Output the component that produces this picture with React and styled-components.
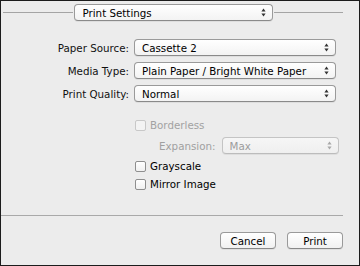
import React from "react";
import styled, { createGlobalStyle } from "styled-components";

const Global = createGlobalStyle`
  * { box-sizing: border-box; }
  html, body { margin: 0; padding: 0; background: #ececec; }
  body { font-family: "DejaVu Sans", "Liberation Sans", sans-serif; }
`;

const Window = styled.div`
  width: 360px;
  height: 266px;
  border: 1px solid #1c1c1c;
  background: #ececec;
  display: flex;
  flex-direction: column;
  font-size: 10.3px;
  color: #000;
`;

const Header = styled.div`
  display: flex;
  align-items: center;
  margin-top: 3px;
  padding: 0 16px 0 2px;
  gap: 1px;
`;

const HeaderLine = styled.div`
  flex: 1;
  height: 1px;
  background: #a4a4a4;
`;

const PopupBox = styled.div`
  width: ${(p) => p.$width}px;
  height: ${(p) => p.$height || 17}px;
  flex: none;
  display: flex;
  align-items: center;
  padding: 0 4px 0 ${(p) => p.$pad || 7}px;
  border: 1px solid ${(p) => (p.$disabled ? "#c4c4c4" : "#9a9a9a")};
  border-bottom-color: ${(p) => (p.$disabled ? "#bcbcbc" : "#8a8a8a")};
  border-radius: 4px;
  background: ${(p) =>
    p.$disabled
      ? "linear-gradient(#f6f6f6, #efefef)"
      : "linear-gradient(#ffffff, #f3f3f3)"};
  box-shadow: 0 1px 0 rgba(0, 0, 0, 0.06);
  color: ${(p) => (p.$disabled ? "#9c9c9c" : "#000")};
  font-size: 10.3px;
  white-space: nowrap;
`;

const PopupText = styled.span`
  flex: 1;
  overflow: hidden;
`;

const ArrowSvg = styled.svg`
  flex: none;
  margin-right: 2px;
`;

function Arrows({ disabled }) {
  const c = disabled ? "#a8a8a8" : "#333";
  return (
    <ArrowSvg width="5" height="9" viewBox="0 0 5 9">
      <path d="M2.5 0.5 L4.6 3.5 L0.4 3.5 Z" fill={c} />
      <path d="M2.5 8.5 L4.6 5.5 L0.4 5.5 Z" fill={c} />
    </ArrowSvg>
  );
}

function Popup({ children, width, disabled, height, pad }) {
  return (
    <PopupBox $width={width} $disabled={disabled} $height={height} $pad={pad}>
      <PopupText>{children}</PopupText>
      <Arrows disabled={disabled} />
    </PopupBox>
  );
}

const Form = styled.div`
  display: flex;
  flex-direction: column;
  gap: 6px;
  margin-top: 18px;
`;

const Row = styled.div`
  display: flex;
  align-items: center;
  gap: 5px;
`;

const Label = styled.div`
  width: ${(p) => p.$width}px;
  text-align: right;
  color: ${(p) => (p.$disabled ? "#a0a0a0" : "#111")};
  white-space: nowrap;
  flex: none;
`;

const Options = styled.div`
  display: flex;
  flex-direction: column;
  gap: 6px;
  margin-top: 17px;
  padding-left: 134px;
`;

const CheckRow = styled.label`
  display: flex;
  align-items: center;
  gap: 4px;
  height: 12px;
  color: ${(p) => (p.$disabled ? "#a2a2a2" : "#000")};
`;

const Box = styled.span`
  width: 11px;
  height: 11px;
  flex: none;
  border: 1px solid ${(p) => (p.$disabled ? "#c8c8c8" : "#8e8e8e")};
  border-radius: 2px;
  background: ${(p) =>
    p.$disabled ? "#f3f3f3" : "linear-gradient(#ffffff, #f0f0f0)"};
`;

const SubRow = styled.div`
  display: flex;
  align-items: center;
  gap: 6px;
  padding-left: 24px;
`;

const Separator = styled.div`
  height: 1px;
  background: #a9a9a9;
  margin: 25px 16px 0 0;
`;

const Footer = styled.div`
  display: flex;
  justify-content: flex-end;
  gap: 11px;
  padding: 16px 16px 0 0;
`;

const Button = styled.button`
  width: 56px;
  height: 17px;
  padding: 0;
  border: 1px solid #9a9a9a;
  border-bottom-color: #888;
  border-radius: 4px;
  background: linear-gradient(#ffffff, #f1f1f1);
  box-shadow: 0 1px 0 rgba(0, 0, 0, 0.06);
  font-family: inherit;
  font-size: 10.3px;
  color: #000;
`;

export default function App() {
  return (
    <>
      <Global />
      <Window>
        <Header>
          <HeaderLine />
          <Popup width={199} pad={8}>
            Print Settings
          </Popup>
          <HeaderLine />
        </Header>
        <Form>
          <Row>
            <Label $width={128}>Paper Source:</Label>
            <Popup width={202}>Cassette 2</Popup>
          </Row>
          <Row>
            <Label $width={128}>Media Type:</Label>
            <Popup width={202}>Plain Paper / Bright White Paper</Popup>
          </Row>
          <Row>
            <Label $width={128}>Print Quality:</Label>
            <Popup width={202}>Normal</Popup>
          </Row>
        </Form>
        <Options>
          <CheckRow $disabled>
            <Box $disabled />
            Borderless
          </CheckRow>
          <SubRow>
            <Label $disabled>Expansion:</Label>
            <Popup width={117} disabled>
              Max
            </Popup>
          </SubRow>
          <CheckRow>
            <Box />
            Grayscale
          </CheckRow>
          <CheckRow>
            <Box />
            Mirror Image
          </CheckRow>
        </Options>
        <Separator />
        <Footer>
          <Button>Cancel</Button>
          <Button>Print</Button>
        </Footer>
      </Window>
    </>
  );
}
